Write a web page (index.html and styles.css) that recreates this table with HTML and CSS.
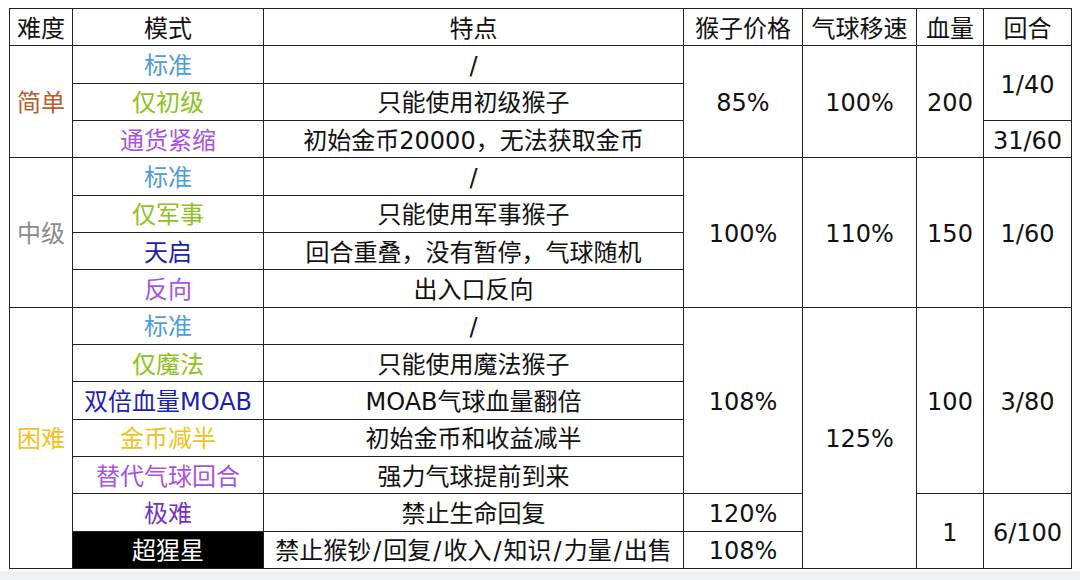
FILE: index.html
```html
<!DOCTYPE html>
<html lang="zh-CN">
<head>
<meta charset="utf-8">
<title>难度模式</title>
<link rel="stylesheet" href="styles.css">
</head>
<body>
<div class="sheet">
<table class="modes">
<colgroup>
<col class="c1"><col class="c2"><col class="c3"><col class="c4"><col class="c5"><col class="c6"><col class="c7">
</colgroup>
<thead>
<tr><th>难度</th><th>模式</th><th>特点</th><th>猴子价格</th><th>气球移速</th><th>血量</th><th>回合</th></tr>
</thead>
<tbody>
<tr>
<td rowspan="3" class="easy">简单</td>
<td class="std">标准</td><td>/</td>
<td rowspan="3">85%</td><td rowspan="3">100%</td><td rowspan="3">200</td><td rowspan="2">1/40</td>
</tr>
<tr><td class="only">仅初级</td><td>只能使用初级猴子</td></tr>
<tr><td class="purple">通货紧缩</td><td>初始金币20000，无法获取金币</td><td>31/60</td></tr>

<tr>
<td rowspan="4" class="medium">中级</td>
<td class="std">标准</td><td>/</td>
<td rowspan="4">100%</td><td rowspan="4">110%</td><td rowspan="4">150</td><td rowspan="4">1/60</td>
</tr>
<tr><td class="only">仅军事</td><td>只能使用军事猴子</td></tr>
<tr><td class="navy">天启</td><td>回合重叠，没有暂停，气球随机</td></tr>
<tr><td class="purple">反向</td><td>出入口反向</td></tr>

<tr>
<td rowspan="7" class="hard">困难</td>
<td class="std">标准</td><td>/</td>
<td rowspan="5">108%</td><td rowspan="7">125%</td><td rowspan="5">100</td><td rowspan="5">3/80</td>
</tr>
<tr><td class="only">仅魔法</td><td>只能使用魔法猴子</td></tr>
<tr><td class="navy">双倍血量MOAB</td><td>MOAB气球血量翻倍</td></tr>
<tr><td class="gold">金币减半</td><td>初始金币和收益减半</td></tr>
<tr><td class="purple">替代气球回合</td><td>强力气球提前到来</td></tr>
<tr><td class="violet">极难</td><td>禁止生命回复</td><td>120%</td><td rowspan="2">1</td><td rowspan="2">6/100</td></tr>
<tr><td class="chimps">超猩星</td><td class="rules">禁止猴钞<span class="sep">/</span>回复<span class="sep">/</span>收入<span class="sep">/</span>知识<span class="sep">/</span>力量<span class="sep">/</span>出售</td><td>108%</td></tr>
</tbody>
</table>
</div>
</body>
</html>
```
FILE: styles.css
```css
html, body {
  margin: 0;
  padding: 0;
  background: #eef0f1;
}
body {
  width: 1080px;
  height: 580px;
  overflow: hidden;
  font-family: "DejaVu Sans", "Noto Sans CJK SC", sans-serif;
}
.sheet {
  background: #ffffff;
  padding: 8px 0 2px 9px;
}
.modes {
  border-collapse: collapse;
  table-layout: fixed;
  width: 1062px;
  border: 1px solid #555;
  color: #111;
  font-size: 24px;
  line-height: 1;
}
.c1 { width: 63px; }
.c2 { width: 191px; }
.c3 { width: 420px; }
.c4 { width: 119px; }
.c5 { width: 114px; }
.c6 { width: 67px; }
.c7 { width: 88px; }
.modes th, .modes td {
  border: 1px solid #222;
  height: 33.33px;
  padding: 3px 0 0;
  text-align: center;
  vertical-align: middle;
  font-weight: normal;
  white-space: nowrap;
}
.sep { margin: 0 2px; }
.easy { color: #b5612a; }
.medium { color: #8c8c8c; }
.hard { color: #f1c21b; }
.std { color: #4b9de0; }
.only { color: #8dc220; }
.purple { color: #a653e3; }
.navy { color: #1d1fae; }
.gold { color: #f1c21b; }
.violet { color: #7631c2; }
.chimps { background: #000; color: #fff; }
```
